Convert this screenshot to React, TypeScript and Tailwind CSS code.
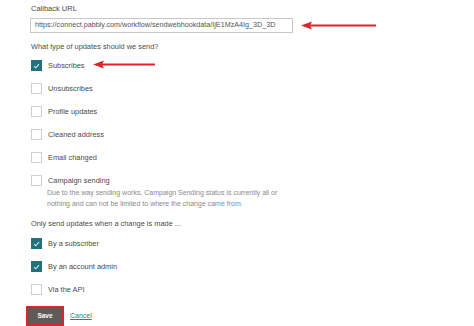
// =====================
// Mailchimp webhook settings form (screenshot recreation)

type Option = { label: string; checked: boolean; note?: string };

const updateTypes: Option[] = [
  { label: 'Subscribes', checked: true },
  { label: 'Unsubscribes', checked: false },
  { label: 'Profile updates', checked: false },
  { label: 'Cleaned address', checked: false },
  { label: 'Email changed', checked: false },
  {
    label: 'Campaign sending',
    checked: false,
    note: 'Due to the way sending works, Campaign Sending status is currently all or nothing and can not be limited to where the change came from.',
  },
];

const sources: Option[] = [
  { label: 'By a subscriber', checked: true },
  { label: 'By an account admin', checked: true },
  { label: 'Via the API', checked: false },
];

// =====================
// small pieces
function Box({ checked }: { checked: boolean }) {
  if (checked) {
    return (
      <span className="flex h-[11px] w-[11px] shrink-0 items-center justify-center bg-[#23717b]">
        <svg width="7" height="6" viewBox="0 0 7 6" fill="none">
          <path d="M1 3.2 L2.8 4.8 L6 1.2" stroke="#d8eef0" strokeWidth="1.1" />
        </svg>
      </span>
    );
  }
  return <span className="h-[11px] w-[11px] shrink-0 border border-[#cfcfcf] bg-white" />;
}

function CheckRow({ opt }: { opt: Option }) {
  return (
    <div className="flex flex-col">
      <div className="flex h-[11px] items-center gap-[6px]">
        <Box checked={opt.checked} />
        <span className="text-[7.4px] leading-[10px] text-[#4a4a4a]">{opt.label}</span>
      </div>
      {opt.note && (
        <p className="ml-[16px] mt-[1px] w-[250px] text-[7px] leading-[11px] text-[#8a8a8a]">{opt.note}</p>
      )}
    </div>
  );
}

function Arrow({ className, width }: { className: string; width: number }) {
  return (
    <svg className={className} width={width} height="9" viewBox={`0 0 ${width} 9`}>
      <path d={`M0 4.5 L11 0.5 L9 4.5 L11 8.5 Z`} fill="#d8262c" />
      <line x1="8" y1="4.5" x2={width} y2="4.5" stroke="#d8262c" strokeWidth="2.2" />
    </svg>
  );
}

// =====================
// App Root
export default function App() {
  return (
    <div
      className="relative h-[326px] w-[474px] overflow-hidden bg-white pl-[31px] pt-[4px]"
      style={{ fontFamily: '"Liberation Sans", Arial, sans-serif' }}
    >
      <label className="block text-[7.5px] leading-[10px] text-[#4a4a4a]">Callback URL</label>
      <div className="ml-[-1px] mt-[4px] flex h-[15px] w-[263px] items-center border border-[#c8c8c8] pl-[4px] text-[7.2px] text-[#555]">
        https://connect.pabbly.com/workflow/sendwebhookdata/IjE1MzA4Ig_3D_3D
      </div>

      <p className="mt-[9px] text-[7.4px] leading-[10px] text-[#4a4a4a]">What type of updates should we send?</p>
      <div className="mt-[8px] flex flex-col gap-[12px]">
        {updateTypes.map((o) => (
          <CheckRow key={o.label} opt={o} />
        ))}
      </div>

      <p className="mt-[10px] text-[7.4px] leading-[10px] text-[#4a4a4a]">Only send updates when a change is made ...</p>
      <div className="mt-[9px] flex flex-col gap-[12px]">
        {sources.map((o) => (
          <CheckRow key={o.label} opt={o} />
        ))}
      </div>

      <div className="ml-[-5px] mt-[11px] flex items-center gap-[6px]">
        <div className="border-2 border-[#d8262c]">
          <button className="flex h-[16px] w-[34px] items-center justify-center bg-[#5d5b57] text-[6.5px] font-bold text-white">
            Save
          </button>
        </div>
        <a className="text-[7px] text-[#2a7f8a] underline">Cancel</a>
      </div>

      {/* annotation arrows */}
      <Arrow className="absolute left-[301px] top-[21px]" width={75} />
      <Arrow className="absolute left-[93px] top-[60px]" width={62} />
    </div>
  );
}
